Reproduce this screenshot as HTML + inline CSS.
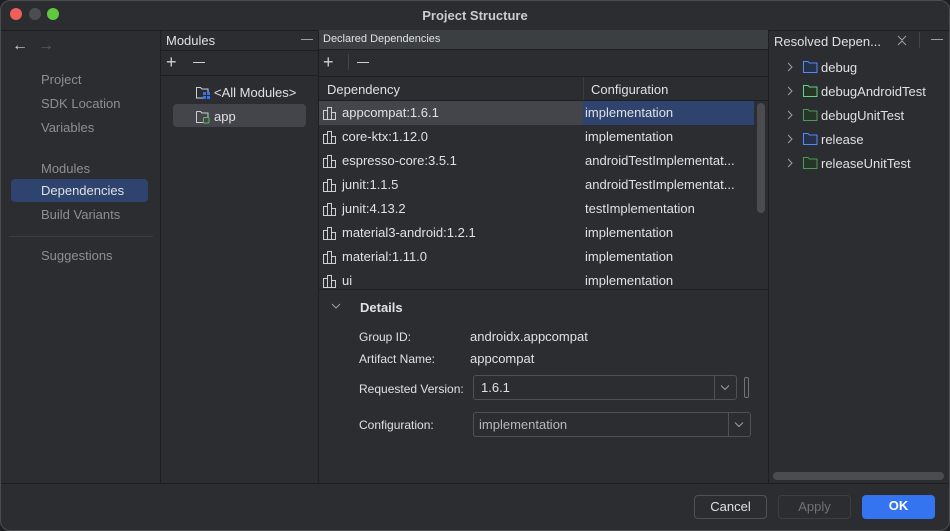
<!DOCTYPE html><html><head><style>
*{margin:0;padding:0;box-sizing:border-box}
body{width:950px;height:531px;background:#1e1f22;font-family:"Liberation Sans",sans-serif;font-size:13px;color:#dfe1e5;overflow:hidden;position:relative}
.win{position:absolute;left:0;top:0;width:950px;height:531px;background:#2b2d30;border-radius:10px;border:1px solid #4a4c50;overflow:hidden}
.a{position:absolute;white-space:nowrap}
.hl{position:absolute;height:1px;background:#1e1f22}
.vl{position:absolute;width:1px;background:#1e1f22}
.g{color:#8c8f94}
.dep{position:absolute;left:322px;width:440px;height:24px;line-height:24px}
.dep svg{position:absolute;left:2px;top:6px}
.dep .n{position:absolute;left:21px}
.dep .c{position:absolute;left:264px}
.btn{position:absolute;top:495px;width:73px;height:24px;border-radius:4px;text-align:center;line-height:22px;font-size:13px}
</style></head><body><div class="win">
<div class="a" style="left:9px;top:7px;width:12px;height:12px;border-radius:6px;background:#ed5f5a"></div>
<div class="a" style="left:28px;top:7px;width:12px;height:12px;border-radius:6px;background:#4d4d50"></div>
<div class="a" style="left:46px;top:7px;width:12px;height:12px;border-radius:6px;background:#5fc83f"></div>
<div class="a" style="left:0;top:7px;width:948px;text-align:center;font-weight:bold;font-size:13px;color:#c9ccd1">Project Structure</div>
<div class="hl" style="left:0;top:29px;width:950px"></div>
<div class="a" style="left:11px;top:36px;font-size:16px;color:#ced0d6">←</div>
<div class="a" style="left:37px;top:36px;font-size:16px;color:#5a5d63">→</div>
<div class="a g" style="left:40px;top:71px">Project</div>
<div class="a g" style="left:40px;top:95px">SDK Location</div>
<div class="a g" style="left:40px;top:119px">Variables</div>
<div class="a g" style="left:40px;top:160px">Modules</div>
<div class="a" style="left:10px;top:178px;width:137px;height:23px;border-radius:4px;background:#2e436e"></div>
<div class="a" style="left:40px;top:182px;color:#dfe1e5">Dependencies</div>
<div class="a g" style="left:40px;top:206px">Build Variants</div>
<div class="hl" style="left:8px;top:235px;width:144px;background:#393b40"></div>
<div class="a g" style="left:40px;top:247px">Suggestions</div>
<div class="vl" style="left:159px;top:29px;height:454px"></div>
<div class="a" style="left:165px;top:32px">Modules</div>
<div class="a" style="left:300px;top:38px;width:12px;height:1px;background:#9da0a8"></div>
<div class="hl" style="left:160px;top:49px;width:157px"></div>
<div class="a" style="left:165px;top:51px;font-size:18px;color:#ced0d6">+</div>
<div class="a" style="left:192px;top:61px;width:12px;height:1px;background:#ced0d6"></div>
<div class="hl" style="left:160px;top:74px;width:157px"></div>
<svg class="a" style="left:194px;top:83px" width="16" height="16"><path d="M1.5 3.5h4l1.5 1.5h6v9h-11.5z" fill="none" stroke="#ced0d6"/><rect x="8" y="8" width="7" height="7" fill="#3574f0"/><path d="M11.5 8v7M8 11.5h7" stroke="#2b2d30"/></svg>
<div class="a" style="left:213px;top:84px">&lt;All Modules&gt;</div>
<div class="a" style="left:172px;top:103px;width:133px;height:23px;border-radius:4px;background:#43454a"></div>
<svg class="a" style="left:194px;top:107px" width="16" height="16"><path d="M1.5 3.5h4l1.5 1.5h6v4M8 14.5h-6.5v-11" fill="none" stroke="#ced0d6"/><rect x="8.5" y="9.5" width="5.5" height="5.5" rx="1" fill="none" stroke="#5fb865"/></svg>
<div class="a" style="left:213px;top:108px">app</div>
<div class="vl" style="left:317px;top:29px;height:454px"></div>
<div class="a" style="left:318px;top:29px;width:449px;height:19px;background:#3c3f41"></div>
<div class="a" style="left:322px;top:32px;font-size:11px;color:#dfe1e5">Declared Dependencies</div>
<div class="hl" style="left:318px;top:48px;width:449px"></div>
<div class="a" style="left:322px;top:51px;font-size:18px;color:#ced0d6">+</div>
<div class="vl" style="left:347px;top:53px;height:16px;background:#43454a"></div>
<div class="a" style="left:356px;top:61px;width:12px;height:1px;background:#ced0d6"></div>
<div class="hl" style="left:318px;top:75px;width:449px"></div>
<div class="a" style="left:326px;top:81px">Dependency</div>
<div class="vl" style="left:582px;top:76px;height:23px;background:#393b40"></div>
<div class="a" style="left:590px;top:81px">Configuration</div>
<div class="hl" style="left:318px;top:99px;width:449px"></div>
<div class="a" style="left:318px;top:100px;width:265px;height:24px;background:#43454a"></div>
<div class="a" style="left:582px;top:100px;width:171px;height:24px;background:#2e436e"></div>
<div class="a" style="left:756px;top:102px;width:8px;height:110px;border-radius:4px;background:#4a4c50"></div>
<div style="position:absolute;left:0;top:0;width:950px;height:288px;overflow:hidden">
<div class="dep" style="top:100px;left:320px"><svg width="14" height="13"><path d="M.5 12.5v-9h4v9M4.5 12.5v-12h4v12M8.5 12.5v-7h4v7M0 12.5h13" fill="none" stroke="#ced0d6"/></svg><span class="n">appcompat:1.6.1</span><span class="c">implementation</span></div>
<div class="dep" style="top:124px;left:320px"><svg width="14" height="13"><path d="M.5 12.5v-9h4v9M4.5 12.5v-12h4v12M8.5 12.5v-7h4v7M0 12.5h13" fill="none" stroke="#ced0d6"/></svg><span class="n">core-ktx:1.12.0</span><span class="c">implementation</span></div>
<div class="dep" style="top:148px;left:320px"><svg width="14" height="13"><path d="M.5 12.5v-9h4v9M4.5 12.5v-12h4v12M8.5 12.5v-7h4v7M0 12.5h13" fill="none" stroke="#ced0d6"/></svg><span class="n">espresso-core:3.5.1</span><span class="c">androidTestImplementat...</span></div>
<div class="dep" style="top:172px;left:320px"><svg width="14" height="13"><path d="M.5 12.5v-9h4v9M4.5 12.5v-12h4v12M8.5 12.5v-7h4v7M0 12.5h13" fill="none" stroke="#ced0d6"/></svg><span class="n">junit:1.1.5</span><span class="c">androidTestImplementat...</span></div>
<div class="dep" style="top:196px;left:320px"><svg width="14" height="13"><path d="M.5 12.5v-9h4v9M4.5 12.5v-12h4v12M8.5 12.5v-7h4v7M0 12.5h13" fill="none" stroke="#ced0d6"/></svg><span class="n">junit:4.13.2</span><span class="c">testImplementation</span></div>
<div class="dep" style="top:220px;left:320px"><svg width="14" height="13"><path d="M.5 12.5v-9h4v9M4.5 12.5v-12h4v12M8.5 12.5v-7h4v7M0 12.5h13" fill="none" stroke="#ced0d6"/></svg><span class="n">material3-android:1.2.1</span><span class="c">implementation</span></div>
<div class="dep" style="top:244px;left:320px"><svg width="14" height="13"><path d="M.5 12.5v-9h4v9M4.5 12.5v-12h4v12M8.5 12.5v-7h4v7M0 12.5h13" fill="none" stroke="#ced0d6"/></svg><span class="n">material:1.11.0</span><span class="c">implementation</span></div>
<div class="dep" style="top:268px;left:320px"><svg width="14" height="13"><path d="M.5 12.5v-9h4v9M4.5 12.5v-12h4v12M8.5 12.5v-7h4v7M0 12.5h13" fill="none" stroke="#ced0d6"/></svg><span class="n">ui</span><span class="c">implementation</span></div>
</div>
<div class="hl" style="left:318px;top:288px;width:449px"></div>
<svg class="a" style="left:330px;top:301px" width="10" height="8"><path d="M1 2l4 4 4-4" fill="none" stroke="#9da0a8"/></svg>
<div class="a" style="left:359px;top:299px;font-weight:bold">Details</div>
<div class="a" style="left:358px;top:329px;font-size:12px">Group ID:</div>
<div class="a" style="left:469px;top:328px">androidx.appcompat</div>
<div class="a" style="left:358px;top:351px;font-size:12px">Artifact Name:</div>
<div class="a" style="left:469px;top:350px">appcompat</div>
<div class="a" style="left:358px;top:381px;font-size:12px">Requested Version:</div>
<div class="a" style="left:472px;top:374px;width:264px;height:25px;border:1px solid #4e5157;border-radius:3px"></div>
<div class="vl" style="left:713px;top:375px;height:23px;background:#4e5157"></div>
<svg class="a" style="left:719px;top:383px" width="10" height="7"><path d="M1 1.5l4 4 4-4" fill="none" stroke="#9da0a8"/></svg>
<div class="a" style="left:480px;top:379px">1.6.1</div>
<div class="a" style="left:743px;top:376px;width:5px;height:21px;border:1px solid #6f737a;border-radius:2px"></div>
<div class="a" style="left:358px;top:417px;font-size:12px">Configuration:</div>
<div class="a" style="left:472px;top:411px;width:278px;height:25px;border:1px solid #4e5157;border-radius:3px"></div>
<div class="vl" style="left:727px;top:412px;height:23px;background:#4e5157"></div>
<svg class="a" style="left:733px;top:420px" width="10" height="7"><path d="M1 1.5l4 4 4-4" fill="none" stroke="#9da0a8"/></svg>
<div class="a" style="left:478px;top:416px;color:#b4b8bf">implementation</div>
<div class="vl" style="left:767px;top:29px;height:454px"></div>
<div class="a" style="left:773px;top:33px">Resolved Depen...</div>
<svg class="a" style="left:895px;top:33px" width="12" height="12"><path d="M2 2l4 4 4-4M2 11l4-4 4 4" fill="none" stroke="#9da0a8"/></svg>
<div class="vl" style="left:918px;top:31px;height:16px;background:#43454a"></div>
<div class="a" style="left:930px;top:38px;width:12px;height:1px;background:#9da0a8"></div>
<svg class="a" style="left:785px;top:61px" width="8" height="10"><path d="M2 1l4 4-4 4" fill="none" stroke="#9da0a8"/></svg>
<svg class="a" style="left:785px;top:85px" width="8" height="10"><path d="M2 1l4 4-4 4" fill="none" stroke="#9da0a8"/></svg>
<svg class="a" style="left:785px;top:109px" width="8" height="10"><path d="M2 1l4 4-4 4" fill="none" stroke="#9da0a8"/></svg>
<svg class="a" style="left:785px;top:133px" width="8" height="10"><path d="M2 1l4 4-4 4" fill="none" stroke="#9da0a8"/></svg>
<svg class="a" style="left:785px;top:157px" width="8" height="10"><path d="M2 1l4 4-4 4" fill="none" stroke="#9da0a8"/></svg>
<svg class="a" style="left:802px;top:59px" width="15" height="14"><path d="M.5 1.5h4.5l1.5 1.5h7.5v9.5h-13.5z" fill="#25324d" stroke="#548af7"/></svg>
<svg class="a" style="left:802px;top:83px" width="15" height="14"><path d="M.5 1.5h4.5l1.5 1.5h7.5v9.5h-13.5z" fill="#253627" stroke="#5fd38a"/></svg>
<svg class="a" style="left:802px;top:107px" width="15" height="14"><path d="M.5 1.5h4.5l1.5 1.5h7.5v9.5h-13.5z" fill="#253627" stroke="#4e9a55"/></svg>
<svg class="a" style="left:802px;top:131px" width="15" height="14"><path d="M.5 1.5h4.5l1.5 1.5h7.5v9.5h-13.5z" fill="#25324d" stroke="#548af7"/></svg>
<svg class="a" style="left:802px;top:155px" width="15" height="14"><path d="M.5 1.5h4.5l1.5 1.5h7.5v9.5h-13.5z" fill="#253627" stroke="#4e9a55"/></svg>
<div class="a" style="left:820px;top:59px">debug</div>
<div class="a" style="left:820px;top:83px">debugAndroidTest</div>
<div class="a" style="left:820px;top:107px">debugUnitTest</div>
<div class="a" style="left:820px;top:131px">release</div>
<div class="a" style="left:820px;top:155px">releaseUnitTest</div>
<div class="a" style="left:772px;top:471px;width:171px;height:8px;border-radius:4px;background:#4a4c50"></div>
<div class="hl" style="left:0;top:482px;width:950px"></div>
<div class="btn" style="left:693px;top:494px;border:1px solid #4e5157">Cancel</div>
<div class="btn" style="left:777px;top:494px;border:1px solid #3d3f43;color:#6f737a">Apply</div>
<div class="btn" style="left:861px;top:494px;background:#3574f0;color:#fff;font-weight:bold">OK</div>
</div></body></html>
